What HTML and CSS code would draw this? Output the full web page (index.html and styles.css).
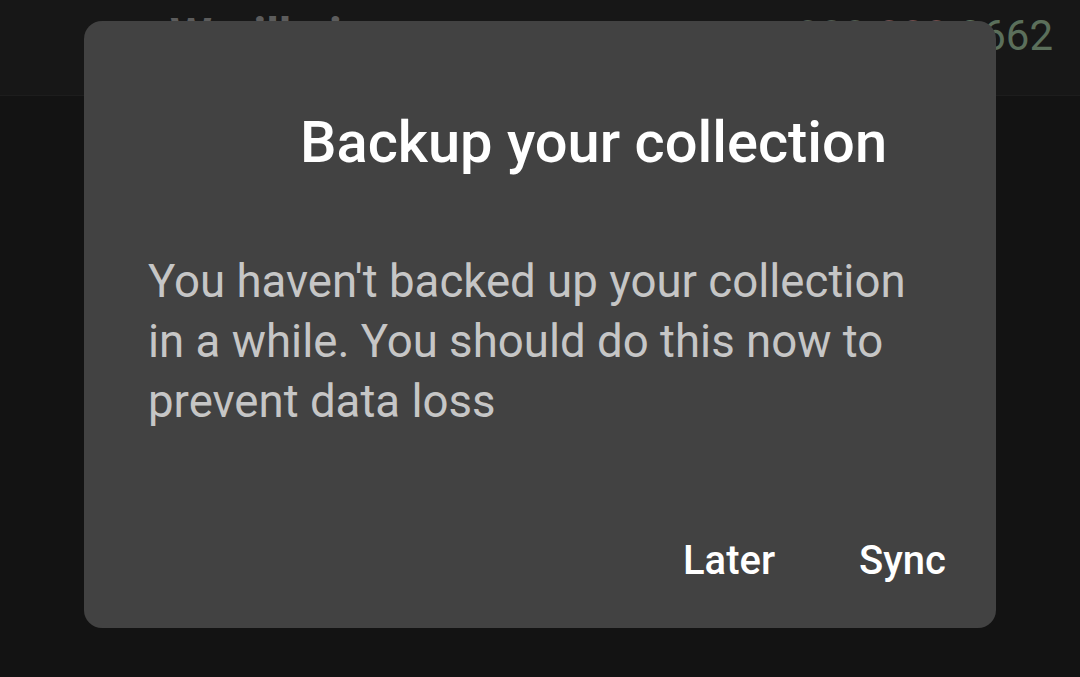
FILE: index.html
```html
<!DOCTYPE html>
<html>
<head>
<meta charset="utf-8">
<link rel="stylesheet" href="styles.css">
</head>
<body>
<div class="screen">
  <header class="topbar">
    <span class="top-title">Wmilkzing</span>
    <span class="top-phone"><span class="muted">000</span> <span class="red">000</span> 0662</span>
  </header>
  <main class="content"></main>
</div>
<div class="dialog" role="dialog">
  <h1 class="dialog-title">Backup your collection</h1>
  <p class="dialog-body">You haven't backed up your collection in a while. You should do this now to prevent data loss</p>
  <div class="dialog-actions">
    <button class="action">Later</button>
    <button class="action">Sync</button>
  </div>
</div>
</body>
</html>
```

FILE: styles.css
```css
html, body {
  margin: 0;
  padding: 0;
  background: #131313;
  font-family: Roboto, "Noto Sans", "Liberation Sans", sans-serif;
  width: 1080px;
  height: 677px;
  overflow: hidden;
}

.screen {
  display: flex;
  flex-direction: column;
  height: 677px;
}

.topbar {
  height: 96px;
  background: #171717;
  border-bottom: 1px solid #1d1d1d;
  display: flex;
  justify-content: space-between;
  align-items: flex-start;
  padding: 0 27px 0 170px;
  box-sizing: border-box;
}

.top-title {
  font-size: 48px;
  font-weight: 700;
  color: #5c5c5c;
  line-height: 56px;
  margin-top: 8px;
}

.top-phone {
  font-size: 42px;
  color: #5b6f5b;
  line-height: 48px;
  margin-top: 12px;
}

.top-phone .red {
  color: #6e4c4c;
}

.top-phone .muted {
  color: #4f5a4f;
}

.content {
  flex: 1;
}

.dialog {
  position: absolute;
  left: 84px;
  top: 21px;
  width: 912px;
  height: 607px;
  background: #424242;
  border-radius: 18px;
  box-sizing: border-box;
  display: flex;
  flex-direction: column;
  padding: 87px 50px 43px 64px;
}

.dialog-title {
  margin: 0;
  padding-left: 152px;
  font-size: 57.8px;
  font-weight: 500;
  line-height: 68px;
  color: #ffffff;
}

.dialog-body {
  margin: 76px 14px 0 0;
  font-size: 45.6px;
  line-height: 60px;
  color: #c6c6c6;
  font-weight: 400;
}

.dialog-actions {
  margin-top: auto;
  display: flex;
  justify-content: flex-end;
  gap: 84px;
}

.action {
  background: none;
  border: none;
  padding: 0;
  font-family: inherit;
  font-size: 40px;
  font-weight: 500;
  line-height: 48px;
  color: #ffffff;
}
```
